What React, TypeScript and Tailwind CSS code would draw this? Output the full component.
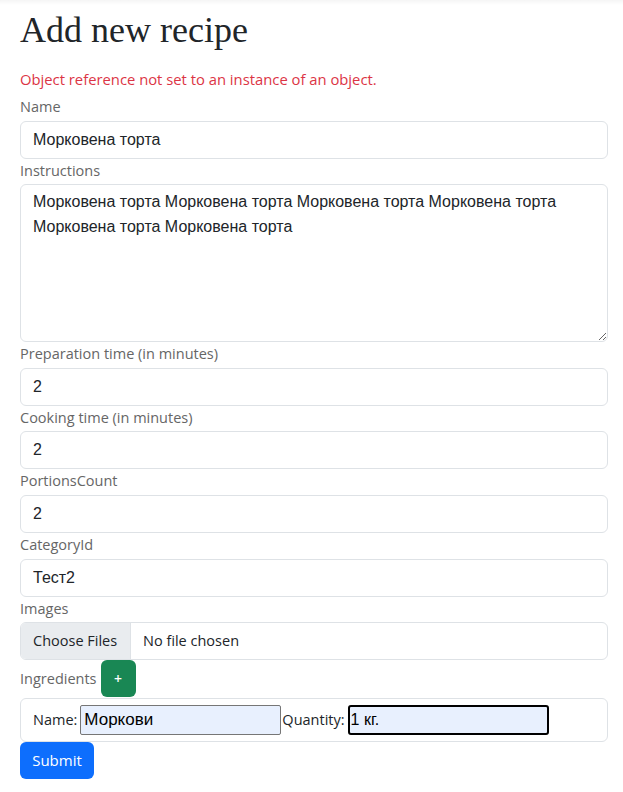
import React from 'react';

const sansUi = '"Open Sans", "Noto Sans", sans-serif';
const arial = '"Liberation Sans", Arial, sans-serif';

const labelCls = "block text-[14.5px] leading-6 text-[#666]";
const inputCls =
  "block h-[38px] w-full rounded-[6px] border border-[#dee2e6] bg-white px-3 text-[16px] text-[#212529] outline-none";

const Field = ({ label, value, gap }: { label: string; value: string; gap: string }) => (
  <div>
    <label className={`${labelCls} ${gap}`}>{label}</label>
    <input className={inputCls} style={{ fontFamily: arial }} defaultValue={value} readOnly />
  </div>
);

export default function App() {
  return (
    <div className="min-h-screen bg-white" style={{ fontFamily: sansUi }}>
      <div className="h-[5px] bg-gradient-to-b from-[#f5f5f5] to-white" />
      <div className="pl-5 pr-[15px]">
        <h1
          className="mt-[4px] h-[43px] text-[36px] leading-[43px] text-[#212529]"
          style={{ fontFamily: '"Liberation Serif", "DejaVu Serif", serif' }}
        >
          Add new recipe
        </h1>
        <p className="mt-[15px] h-[28px] text-[14.8px] leading-6 text-[#dc3545]">
          Object reference not set to an instance of an object.
        </p>

        <Field label="Name" value="Морковена торта" gap="h-[26px]" />

        <label className={`${labelCls} h-[25px]`}>Instructions</label>
        <textarea
          className="block h-[158px] w-full rounded-[6px] border border-[#dee2e6] bg-white px-3 pt-[4px] text-[16px] text-[#212529] outline-none"
          style={{ fontFamily: arial, lineHeight: '25px' }}
          defaultValue="Морковена торта Морковена торта Морковена торта Морковена торта Морковена торта Морковена торта"
          readOnly
        />

        <Field label="Preparation time (in minutes)" value="2" gap="h-[26px]" />
        <Field label="Cooking time (in minutes)" value="2" gap="h-[25px]" />
        <Field label="PortionsCount" value="2" gap="h-[26px]" />
        <Field label="CategoryId" value="Тест2" gap="h-[26px]" />

        <label className={`${labelCls} h-[25px]`}>Images</label>
        <div className="flex h-[38px] w-full overflow-hidden rounded-[6px] border border-[#dee2e6] text-[14.5px] text-[#212529]">
          <div className="flex w-[110px] items-center whitespace-nowrap border-r border-[#dee2e6] bg-[#e9ecef] px-3">
            Choose Files
          </div>
          <div className="flex items-center whitespace-nowrap px-3">No file chosen</div>
        </div>

        <div className="mb-[1px] flex items-center">
          <span className="text-[14.5px] leading-6 text-[#666]">Ingredients</span>
          <button className="ml-1 flex h-[37px] w-[35px] items-center justify-center rounded-[6px] bg-[#198754] text-[14px] font-semibold text-white">
            +
          </button>
        </div>

        <div className="flex h-[44px] items-center rounded-[6px] border border-[#dee2e6] px-3 text-[14.5px] text-[#212529]">
          <span className="mr-[3px]">Name:</span>
          <input
            className="h-[30px] w-[201px] rounded-[2px] border border-[#767676] bg-[#e8f0fe] px-[3px] text-[17px] text-black outline-none"
            style={{ fontFamily: arial }}
            defaultValue="Моркови"
            readOnly
          />
          <span className="ml-[1px] mr-[3px]">Quantity:</span>
          <input
            className="h-[30px] w-[201px] rounded-[3px] border-2 border-black bg-[#e8f0fe] px-[1px] text-[16px] text-black outline-none"
            style={{ fontFamily: arial }}
            defaultValue="1 кг."
            readOnly
          />
        </div>

        <button className="h-[37px] w-[74px] rounded-[6px] bg-[#0d6efd] text-[15px] font-medium text-white">
          Submit
        </button>
      </div>
    </div>
  );
}
